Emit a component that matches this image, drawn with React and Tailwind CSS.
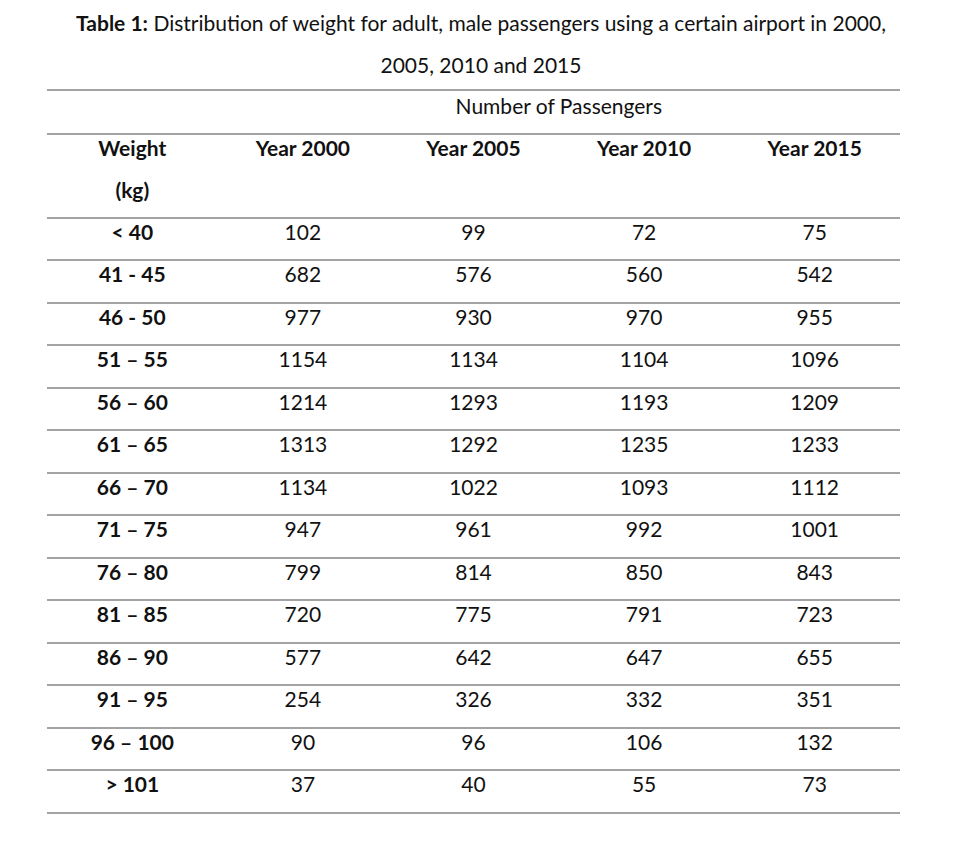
const ROWS = [
  ['< 40', '102', '99', '72', '75'],
  ['41 - 45', '682', '576', '560', '542'],
  ['46 - 50', '977', '930', '970', '955'],
  ['51 – 55', '1154', '1134', '1104', '1096'],
  ['56 – 60', '1214', '1293', '1193', '1209'],
  ['61 – 65', '1313', '1292', '1235', '1233'],
  ['66 – 70', '1134', '1022', '1093', '1112'],
  ['71 – 75', '947', '961', '992', '1001'],
  ['76 – 80', '799', '814', '850', '843'],
  ['81 – 85', '720', '775', '791', '723'],
  ['86 – 90', '577', '642', '647', '655'],
  ['91 – 95', '254', '326', '332', '351'],
  ['96 – 100', '90', '96', '106', '132'],
  ['> 101', '37', '40', '55', '73']
]

const YEARS = ['Year 2000', 'Year 2005', 'Year 2010', 'Year 2015']

export default function App() {
  return (
    <div className="w-[962px] h-[844px] bg-white text-[#111] font-['Lato','Liberation_Sans',sans-serif] text-[21px] overflow-hidden">
      <div className="pt-[2px] text-center leading-[42px]">
        <div><span className="font-bold">Table 1:</span> Distribution of weight for adult, male passengers using a certain airport in 2000,</div>
        <div>2005, 2010 and 2015</div>
      </div>
      <div className="ml-[47px] w-[853px] mt-[3px]">
        <div className="border-t-2 border-[#a3a3a3] h-[43.5px] grid grid-cols-5">
          <div className="col-span-4 col-start-2 text-center leading-[30px]">Number of Passengers</div>
        </div>
        <div className="border-t-2 border-[#a3a3a3] h-[84px] grid grid-cols-5 font-bold text-center leading-[42px]">
          <div className="-mt-[8px]">Weight<br />(kg)</div>
          {YEARS.map(y => <div key={y} className="-mt-[8px]">{y}</div>)}
        </div>
        {ROWS.map((r, i) => (
          <div key={i} className="border-t-2 border-[#a3a3a3] h-[42.5px] grid grid-cols-5 text-center leading-[26px]">
            {r.map((c, j) => (
              <div key={j} className={j === 0 ? 'font-bold' : ''}>{c}</div>
            ))}
          </div>
        ))}
        <div className="border-t-2 border-[#a3a3a3]" />
      </div>
    </div>
  )
}
